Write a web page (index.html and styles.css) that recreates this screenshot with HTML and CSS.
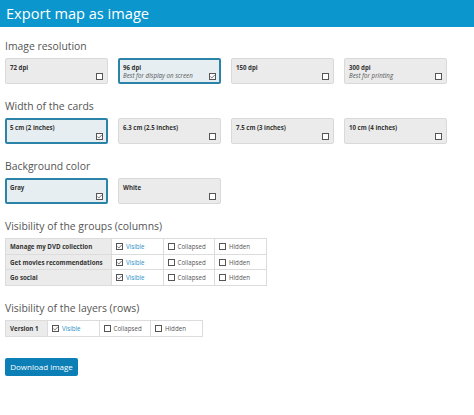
FILE: index.html
```html
<!DOCTYPE html>
<html>
<head>
<meta charset="utf-8">
<link rel="stylesheet" href="styles.css">
</head>
<body>
<header class="topbar"><h1 class="title">Export map as image</h1></header>
<main class="content">
  <h2 class="section-title first">Image resolution</h2>
  <div class="cards">
    <div class="card"><div class="card-label">72 dpi</div><div class="card-foot"><span class="card-desc"></span><span class="box"></span></div></div>
    <div class="card selected"><div class="card-label">96 dpi</div><div class="card-foot"><span class="card-desc">Best for display on screen</span><span class="box checked"><svg viewBox="0 0 8 8"><path d="M1.6 4.1 L3.3 5.7 L6.6 2.2" fill="none" stroke="#555" stroke-width="0.9"/></svg></span></div></div>
    <div class="card"><div class="card-label">150 dpi</div><div class="card-foot"><span class="card-desc"></span><span class="box"></span></div></div>
    <div class="card"><div class="card-label">300 dpi</div><div class="card-foot"><span class="card-desc">Best for printing</span><span class="box"></span></div></div>
  </div>

  <h2 class="section-title">Width of the cards</h2>
  <div class="cards">
    <div class="card selected"><div class="card-label">5 cm (2 inches)</div><div class="card-foot"><span class="card-desc"></span><span class="box checked"><svg viewBox="0 0 8 8"><path d="M1.6 4.1 L3.3 5.7 L6.6 2.2" fill="none" stroke="#555" stroke-width="0.9"/></svg></span></div></div>
    <div class="card"><div class="card-label">6.3 cm (2.5 inches)</div><div class="card-foot"><span class="card-desc"></span><span class="box"></span></div></div>
    <div class="card"><div class="card-label">7.5 cm (3 inches)</div><div class="card-foot"><span class="card-desc"></span><span class="box"></span></div></div>
    <div class="card"><div class="card-label">10 cm (4 inches)</div><div class="card-foot"><span class="card-desc"></span><span class="box"></span></div></div>
  </div>

  <h2 class="section-title">Background color</h2>
  <div class="cards">
    <div class="card selected"><div class="card-label">Gray</div><div class="card-foot"><span class="card-desc"></span><span class="box checked"><svg viewBox="0 0 8 8"><path d="M1.6 4.1 L3.3 5.7 L6.6 2.2" fill="none" stroke="#555" stroke-width="0.9"/></svg></span></div></div>
    <div class="card"><div class="card-label">White</div><div class="card-foot"><span class="card-desc"></span><span class="box"></span></div></div>
  </div>

  <h2 class="section-title">Visibility of the groups (columns)</h2>
  <table class="vis groups">
    <tr><th>Manage my DVD collection</th><td class="on"><span class="box checked"><svg viewBox="0 0 8 8"><path d="M1.6 4.1 L3.3 5.7 L6.6 2.2" fill="none" stroke="#555" stroke-width="0.9"/></svg></span>Visible</td><td><span class="box"></span>Collapsed</td><td><span class="box"></span>Hidden</td></tr>
    <tr><th>Get movies recommendations</th><td class="on"><span class="box checked"><svg viewBox="0 0 8 8"><path d="M1.6 4.1 L3.3 5.7 L6.6 2.2" fill="none" stroke="#555" stroke-width="0.9"/></svg></span>Visible</td><td><span class="box"></span>Collapsed</td><td><span class="box"></span>Hidden</td></tr>
    <tr><th>Go social</th><td class="on"><span class="box checked"><svg viewBox="0 0 8 8"><path d="M1.6 4.1 L3.3 5.7 L6.6 2.2" fill="none" stroke="#555" stroke-width="0.9"/></svg></span>Visible</td><td><span class="box"></span>Collapsed</td><td><span class="box"></span>Hidden</td></tr>
  </table>

  <h2 class="section-title">Visibility of the layers (rows)</h2>
  <table class="vis layers">
    <tr><th>Version 1</th><td class="on"><span class="box checked"><svg viewBox="0 0 8 8"><path d="M1.6 4.1 L3.3 5.7 L6.6 2.2" fill="none" stroke="#555" stroke-width="0.9"/></svg></span>Visible</td><td><span class="box"></span>Collapsed</td><td><span class="box"></span>Hidden</td></tr>
  </table>

  <button class="download">Download image</button>
</main>
</body>
</html>
```

FILE: styles.css
```css
* { box-sizing: border-box; }
html, body { margin: 0; padding: 0; background: #fff; }
body { font-family: "Open Sans", "Liberation Sans", sans-serif; color: #555; }

.topbar {
  background: #0b96cd;
  height: 27px;
  padding-left: 6px;
  display: flex;
  align-items: center;
}
.title {
  margin: 0;
  color: #fff;
  font-weight: 400;
  font-size: 14.6px;
  line-height: 27px;
}

.content { padding: 0 5px; }

.section-title {
  margin: 14px 0 4px;
  font-size: 10.4px;
  line-height: 16px;
  font-weight: 400;
  color: #555;
}
.section-title.first { margin-top: 11px; }

.cards {
  display: grid;
  grid-template-columns: repeat(4, 103px);
  column-gap: 10px;
}

.card {
  height: 26px;
  background: #ebebeb;
  border: 1px solid #d9d9d9;
  border-radius: 2px;
  padding: 5px 4px 3px 4px;
  display: flex;
  flex-direction: column;
  justify-content: space-between;
}
.card.selected {
  background: #e6eef2;
  border: 2px solid #2b84a8;
  padding: 4px 3px 2px 3px;
}
.card-label {
  font-weight: 700;
  font-size: 6.1px;
  line-height: 8px;
  color: #333;
}
.card-foot {
  display: flex;
  justify-content: space-between;
  align-items: center;
}
.card-desc {
  font-style: italic;
  font-size: 6.2px;
  line-height: 8px;
  color: #555;
}

.box {
  display: inline-block;
  width: 7px;
  height: 7px;
  border: 1px solid #555;
  background: #fff;
  flex: none;
  position: relative;
}
.box svg {
  position: absolute;
  left: -1px;
  top: -1px;
  width: 7px;
  height: 7px;
}
.box.checked { background: #fafafa; }

.vis {
  border-collapse: collapse;
  font-size: 6.2px;
}
.vis th, .vis td {
  border: 1px solid #dcdcdc;
  height: 15.7px;
  padding: 0 4px;
  text-align: left;
  white-space: nowrap;
}
.vis th {
  background: #ebebeb;
  font-weight: 700;
  color: #333;
}
.vis td { color: #555; width: 51.5px; }
.vis td.on { color: #2a90c8; }
.vis td .box {
  vertical-align: -1px;
  margin-right: 3px;
}
.groups th { width: 106px; }
.layers th { width: 42px; }

.download {
  margin-top: 21px;
  background: #0b7fb6;
  color: #fff;
  border: none;
  border-radius: 2px;
  font-family: "Open Sans", "Liberation Sans", sans-serif;
  font-size: 8px;
  height: 18px;
  width: 73px;
  padding: 0;
  display: block;
}
```
